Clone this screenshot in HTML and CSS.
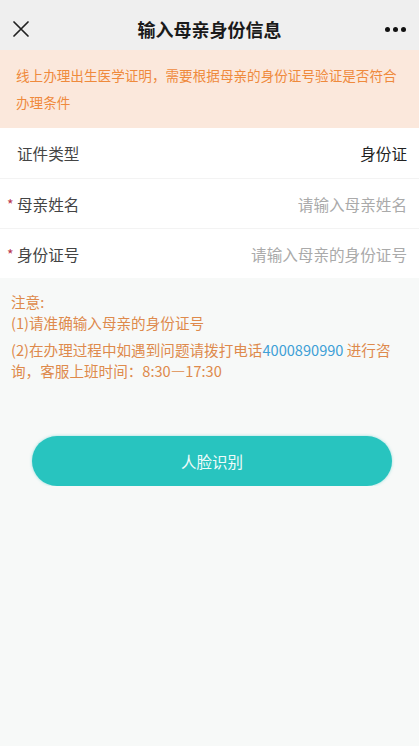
FILE: index.html
```html
<!DOCTYPE html>
<html lang="zh-CN">
<head>
    <meta charset="UTF-8">
    <meta name="viewport" content="width=device-width, initial-scale=1.0">
    <title>输入母亲身份信息</title>
    <link rel="stylesheet" href="styles.css">
</head>
<body>
    <!-- Top bar -->
    <header class="nav">
        <button class="nav-btn close" aria-label="关闭">
            <svg width="16" height="16" viewBox="0 0 16 16">
                <path d="M1 1 L15 15 M15 1 L1 15" stroke="#222" stroke-width="1.7" fill="none" stroke-linecap="round"/>
            </svg>
        </button>
        <h1 class="nav-title">输入母亲身份信息</h1>
        <button class="nav-btn more" aria-label="更多">
            <span class="dot"></span><span class="dot"></span><span class="dot"></span>
        </button>
    </header>

    <!-- Notice -->
    <div class="notice">线上办理出生医学证明，需要根据母亲的身份证号验证是否符合办理条件</div>

    <!-- Form -->
    <form class="form" id="motherForm">
        <div class="row">
            <span class="label">证件类型</span>
            <span class="value">身份证</span>
        </div>
        <div class="row">
            <span class="label required">母亲姓名</span>
            <input class="field" type="text" placeholder="请输入母亲姓名">
        </div>
        <div class="row">
            <span class="label required">身份证号</span>
            <input class="field" type="text" placeholder="请输入母亲的身份证号">
        </div>
    </form>

    <!-- Tips -->
    <div class="tips">
        <p>注意:<br>(1)请准确输入母亲的身份证号</p>
        <p>(2)在办理过程中如遇到问题请拨打电话<a class="phone" href="tel:4000890990">4000890990</a> 进行咨询，客服上班时间：8:30—17:30</p>
    </div>

    <div class="actions">
        <button class="primary" type="submit" form="motherForm">人脸识别</button>
    </div>
</body>
</html>
```

FILE: styles.css
```css
body {
    margin: 0;
    background-color: #f7f9f8;
    font-family: "Noto Sans CJK SC", "Noto Sans", sans-serif;
    color: #333;
}
button {
    font-family: inherit;
}
.nav {
    height: 42px;
    padding-top: 8px;
    display: flex;
    align-items: center;
    justify-content: space-between;
    background-color: #efefef;
}
.nav-btn {
    width: 44px;
    height: 42px;
    padding: 0;
    border: none;
    background: none;
    display: flex;
    align-items: center;
    justify-content: center;
}
.nav-btn.close {
    justify-content: flex-start;
    padding-left: 13px;
}
.nav-btn.more {
    justify-content: flex-end;
    padding-right: 13px;
    gap: 3px;
}
.dot {
    width: 5px;
    height: 5px;
    border-radius: 50%;
    background-color: #111;
}
.nav-title {
    margin: 0;
    font-size: 18px;
    font-weight: 700;
    color: #1a1a1a;
}
.notice {
    padding: 12px 16px;
    background-color: #fbe8dc;
    color: #ef8a3c;
    font-size: 13.6px;
    line-height: 27px;
}
.form {
    margin: 0;
    background-color: #fff;
}
.row {
    height: 50px;
    padding: 0 12px 0 17px;
    display: flex;
    align-items: center;
    justify-content: space-between;
    position: relative;
}
.row + .row {
    border-top: 1px solid #f3f3f3;
    height: 49px;
}
.label {
    font-size: 15.6px;
    color: #444;
    position: relative;
}
.label.required::before {
    content: "*";
    position: absolute;
    left: -10px;
    top: 1px;
    color: #b8344c;
    font-size: 14px;
}
.value {
    font-size: 15.6px;
    color: #222;
}
.field {
    flex: 1;
    min-width: 0;
    border: none;
    outline: none;
    background: none;
    text-align: right;
    font-family: inherit;
    font-size: 15.6px;
    color: #333;
    padding: 0;
}
.field::placeholder {
    color: #aaa;
}
.tips {
    padding: 13px 10px 0 11px;
    color: #de8a4c;
    font-size: 14.6px;
    line-height: 21px;
}
.tips p {
    margin: 0;
}
.tips p + p {
    margin-top: 6px;
}
.phone {
    color: #3ea0d6;
    text-decoration: none;
}
.actions {
    margin-top: 55px;
    padding: 0 27px 0 32px;
}
.primary {
    display: block;
    width: 100%;
    height: 50px;
    border: none;
    border-radius: 25px;
    background-color: #28c4bf;
    color: #effbfa;
    font-size: 15.5px;
    box-shadow: 0 0 3px rgba(40, 196, 191, 0.5);
}
```
